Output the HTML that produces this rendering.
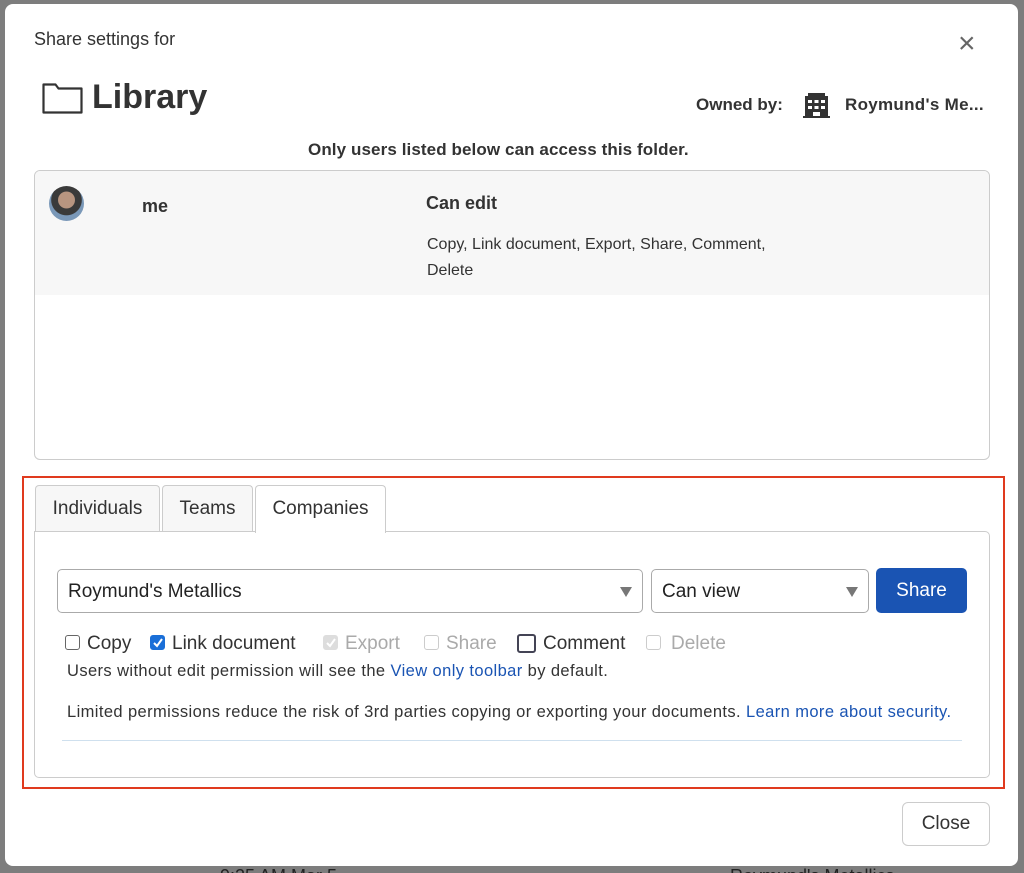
<!DOCTYPE html>
<html><head><style>
html,body{margin:0;width:1024px;height:873px;overflow:hidden}
body{background:#7d7d7d;font-family:"Liberation Sans",sans-serif;position:relative;color:#333}
.a{position:absolute}
.dlg{left:5px;top:4px;width:1013px;height:862px;background:#fff;border-radius:8px}
.cb{position:absolute;top:2px;width:15px;height:15px;border:1px solid #666;border-radius:3px;box-sizing:border-box;background:#fff}
.dis{color:#aaa}
.dis .cb{border-color:#ccc}
.sel{border:1px solid #aaa;border-radius:5px;background:#fff;box-sizing:border-box;font-size:19px;color:#222;padding:11px 10px}
.arr{position:absolute;right:10px;top:17px;width:0;height:0;border-left:6px solid transparent;border-right:6px solid transparent;border-top:10px solid #777}
.tab{top:485px;height:46px;border:1px solid #ccc;border-bottom:none;border-radius:4px 4px 0 0;background:#f7f7f7;box-sizing:border-box;font-size:19px;text-align:center;line-height:46px;color:#333}
.ck{position:absolute;top:633px;font-size:19px;white-space:nowrap;padding-left:22px;height:22px}
.t{font-size:16.5px;letter-spacing:0.4px;white-space:nowrap;color:#333}
</style></head><body>
<div class="a" style="left:220px;top:866px;font-size:18px;color:#222">9:25 AM Mar 5</div>
<div class="a" style="left:730px;top:866px;font-size:18px;color:#222">Roymund's Metallics</div>
<div class="a dlg"></div>
<div class="a" style="left:34px;top:29px;font-size:18px;color:#333">Share settings for</div>
<div class="a" style="left:958px;top:30px;font-size:30px;color:#666;line-height:28px">×</div>
<svg class="a" style="left:42px;top:82px" width="41" height="32" viewBox="0 0 41 32"><path d="M1.5 2.5h12l3 4h23v24h-38z" fill="none" stroke="#333" stroke-width="2.2" stroke-linejoin="round"/></svg>
<div class="a" style="left:92px;top:78px;font-size:34px;font-weight:bold;color:#333">Library</div>
<div class="a" style="left:696px;top:95px;font-size:17px;font-weight:bold;color:#333">Owned by:</div>
<svg class="a" style="left:803px;top:92px" width="27" height="27" viewBox="0 0 27 27"><rect x="2" y="4" width="23" height="21" fill="#333"/><rect x="5" y="1" width="17" height="3" fill="#333"/><g fill="#fff"><rect x="5" y="8" width="4" height="3"/><rect x="11.5" y="8" width="4" height="3"/><rect x="18" y="8" width="4" height="3"/><rect x="5" y="14" width="4" height="3"/><rect x="11.5" y="14" width="4" height="3"/><rect x="18" y="14" width="4" height="3"/><rect x="10" y="20" width="7" height="5"/></g><rect x="0" y="24" width="27" height="2" fill="#333"/></svg>
<div class="a" style="left:845px;top:95px;font-size:17px;font-weight:bold;color:#333;letter-spacing:0.3px">Roymund's Me...</div>
<div class="a" style="left:308px;top:140px;font-size:17px;font-weight:bold;color:#333;letter-spacing:0.1px">Only users listed below can access this folder.</div>
<div class="a" style="left:34px;top:170px;width:956px;height:290px;border:1px solid #ccc;border-radius:6px;box-sizing:border-box;overflow:hidden"><div style="height:124px;background:#f7f7f7"></div></div>
<div class="a" style="left:49px;top:186px;width:35px;height:35px;border-radius:50%;background:radial-gradient(circle at 50% 40%,#b89580 0 30%,#3a3a3a 32% 55%,#7a98b8 57%)"></div>
<div class="a" style="left:142px;top:196px;font-size:18px;font-weight:bold;color:#333">me</div>
<div class="a" style="left:426px;top:193px;font-size:18px;font-weight:bold;color:#333">Can edit</div>
<div class="a" style="left:427px;top:232px;font-size:16px;line-height:26px;color:#333;width:400px">Copy, Link document, Export, Share, Comment,<br>Delete</div>
<div class="a" style="left:22px;top:476px;width:983px;height:313px;border:2px solid #e03a1e;box-sizing:border-box"></div>
<div class="a" style="left:34px;top:531px;width:956px;height:247px;border:1px solid #ccc;border-radius:0 5px 5px 5px;box-sizing:border-box"></div>
<div class="a tab" style="left:35px;width:125px">Individuals</div>
<div class="a tab" style="left:162px;width:91px">Teams</div>
<div class="a tab" style="left:255px;width:131px;height:48px;background:#fff">Companies</div>
<div class="a sel" style="left:57px;top:569px;width:586px;height:44px">Roymund's Metallics<div class="arr"></div></div>
<div class="a sel" style="left:651px;top:569px;width:218px;height:44px">Can view<div class="arr"></div></div>
<div class="a" style="left:876px;top:568px;width:91px;height:45px;background:#1a54b3;border-radius:5px;color:#fff;font-size:19px;text-align:center;line-height:45px">Share</div>

<div class="ck" style="left:65px;color:#333"><span class="cb" style="left:0"></span>Copy</div>
<div class="ck" style="left:150px;color:#333"><span class="cb" style="left:0;background:#1a6fd8;border-color:#1a6fd8"><svg style="position:absolute;left:1px;top:1px" width="12" height="12" viewBox="0 0 12 12"><path d="M2 6l3 3 5-7" stroke="#fff" stroke-width="2" fill="none"/></svg></span>Link document</div>
<div class="ck dis" style="left:323px"><span class="cb" style="left:0;background:#ddd;border-color:#ddd"><svg style="position:absolute;left:1px;top:1px" width="12" height="12" viewBox="0 0 12 12"><path d="M2 6l3 3 5-7" stroke="#fff" stroke-width="2" fill="none"/></svg></span>Export</div>
<div class="ck dis" style="left:424px"><span class="cb" style="left:0"></span>Share</div>
<div class="ck" style="left:517px;color:#333;padding-left:26px"><span class="cb" style="left:0;top:1px;width:19px;height:19px;border:2px solid #445"></span>Comment</div>
<div class="ck dis" style="left:646px;padding-left:25px"><span class="cb" style="left:0"></span>Delete</div>

<div class="a t" style="left:67px;top:662px">Users without edit permission will see the <span style="color:#1a54b3">View only toolbar</span> by default.</div>
<div class="a t" style="left:67px;top:703px">Limited permissions reduce the risk of 3rd parties copying or exporting your documents. <span style="color:#1a54b3">Learn more about security.</span></div>
<div class="a" style="left:62px;top:740px;width:900px;height:1px;background:#cfe0ee"></div>
<div class="a" style="left:902px;top:802px;width:88px;height:44px;border:1px solid #ccc;border-radius:6px;box-sizing:border-box;font-size:19px;text-align:center;line-height:42px;color:#333">Close</div>
</body></html>
